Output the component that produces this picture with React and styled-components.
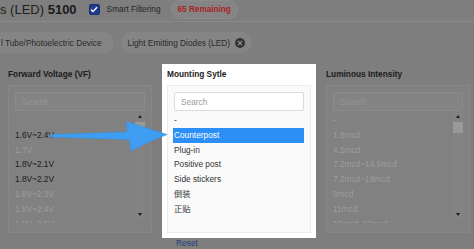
import React from "react";
import styled, { createGlobalStyle } from "styled-components";

const GlobalStyle = createGlobalStyle`
  html, body {
    margin: 0;
    padding: 0;
  }
  body {
    background: #7e7e7e;
    font-family: "Liberation Sans", Arial, "Noto Sans CJK SC", sans-serif;
    overflow: hidden;
  }
`;

const Page = styled.div`
  position: relative;
  width: 474px;
  height: 249px;
  overflow: hidden;
`;

const Header = styled.div`
  display: flex;
  align-items: center;
  height: 18px;
  padding-bottom: 3px;
  border-bottom: 1px solid #898989;
`;

const Title = styled.div`
  font-size: 13px;
  color: #1f1f1f;
  white-space: nowrap;
  b {
    font-weight: 700;
    color: #1a1a1a;
  }
`;

const Check = styled.span`
  display: inline-flex;
  align-items: center;
  justify-content: center;
  width: 11px;
  height: 11px;
  margin-left: 12px;
  box-sizing: border-box;
  border-radius: 2px;
  background: #1f3d8c;
  border: 1px solid #18306e;
`;

const Label = styled.span`
  margin-left: 7px;
  font-size: 8.3px;
  color: #262626;
`;

const Remaining = styled.span`
  margin-left: 10px;
  height: 17px;
  line-height: 17px;
  padding: 0 6px;
  border-radius: 9px;
  background: #858585;
  border: 1px solid #8a8a8a;
  color: #a92424;
  font-size: 8.2px;
  font-weight: 700;
`;

const ChipRow = styled.div`
  display: flex;
  gap: 7px;
  margin-top: 10px;
  margin-left: -6px;
`;

const Chip = styled.div`
  display: flex;
  align-items: center;
  height: 21px;
  padding: 0 ${({ $closable }) => ($closable ? "7px" : "12px")} 0 7px;
  border-radius: 11px;
  background: #858585;
  color: #2a2a2a;
  font-size: 8.3px;
  white-space: nowrap;
`;

const Close = styled.span`
  display: inline-flex;
  align-items: center;
  justify-content: center;
  width: 10px;
  height: 10px;
  margin-left: 5px;
  border-radius: 50%;
  background: #333;
`;

const Columns = styled.div`
  display: grid;
  grid-template-columns: 144px 154px 144px;
  column-gap: 10px;
  margin-top: 11px;
  padding-left: 8px;
`;

const Column = styled.div`
  padding: ${({ $spot }) => ($spot ? "5px" : "5px 0")};
  background: ${({ $spot }) => ($spot ? "#ffffff" : "transparent")};
`;

const ColTitle = styled.div`
  font-size: 8.3px;
  line-height: 10px;
  font-weight: 700;
  color: ${({ $spot }) => ($spot ? "#222" : "#1b1b1b")};
`;

const Box = styled.div`
  margin-top: 6px;
  height: 148px;
  box-sizing: border-box;
  padding: 6px;
  border: 1px solid ${({ $spot }) => ($spot ? "#ececec" : "#878787")};
  background: ${({ $spot }) => ($spot ? "#fafafa" : "#818181")};
`;

const Search = styled.div`
  display: flex;
  align-items: center;
  height: 19px;
  box-sizing: border-box;
  padding-left: 6px;
  border: 1px solid ${({ $spot }) => ($spot ? "#dcdcdc" : "#8b8b8b")};
  border-radius: 2px;
  background: ${({ $spot }) => ($spot ? "#fff" : "#848484")};
  color: ${({ $spot }) => ($spot ? "#9a9a9a" : "#959595")};
  font-size: 8.3px;
`;

const List = styled.div`
  display: flex;
  height: 110px;
  margin-top: 2px;
  margin-left: -1px;
  overflow: hidden;
`;

const Items = styled.div`
  flex: 1;
  min-width: 0;
`;

const Row = styled.div`
  height: 14.8px;
  line-height: 14.8px;
  padding-left: 1px;
  font-size: 8.3px;
  white-space: nowrap;
  color: ${({ $selected, $off, $spot }) =>
    $selected ? "#fff" : $spot ? "#333" : $off ? "#9d9d9d" : "#1c1c1c"};
  background: ${({ $selected }) => ($selected ? "#2b8ff5" : "transparent")};
`;

const Track = styled.div`
  display: flex;
  flex-direction: column;
  align-items: center;
  width: 10px;
  height: 108px;
  background: #838383;
`;

const Arrow = styled.span`
  width: 0;
  height: 0;
  margin-top: ${({ $down }) => ($down ? "auto" : "2px")};
  margin-bottom: ${({ $down }) => ($down ? "5px" : "0")};
  border-left: 2.5px solid transparent;
  border-right: 2.5px solid transparent;
  ${({ $down }) =>
    $down ? "border-top: 3px solid #1e1e1e;" : "border-bottom: 3px solid #1e1e1e;"}
`;

const Thumb = styled.span`
  width: 10px;
  height: 11px;
  margin-top: 4px;
  background: #999;
`;

const Reset = styled.div`
  grid-column: 2;
  padding-left: 14px;
  font-size: 8.4px;
  line-height: 10px;
  color: #22407e;
`;

const Pointer = styled.svg`
  position: absolute;
  left: 0;
  top: 0;
  pointer-events: none;
`;

const columns = [
  {
    title: "Forward Voltage (VF)",
    items: [
      ["\u00a0", true],
      ["1.6V~2.4V", false],
      ["1.7V", true],
      ["1.8V~2.1V", false],
      ["1.8V~2.2V", false],
      ["1.8V~2.3V", true],
      ["1.8V~2.4V", true],
      ["1.8V~2.5V", true],
    ],
    scroll: true,
  },
  {
    title: "Mounting Sytle",
    spot: true,
    items: [
      ["-"],
      ["Counterpost", false, true],
      ["Plug-in"],
      ["Positive post"],
      ["Side stickers"],
      ["倒装"],
      ["正贴"],
    ],
  },
  {
    title: "Luminous Intensity",
    items: [
      ["-", true],
      ["1.8mcd", true],
      ["4.5mcd", true],
      ["7.2mcd~14.5mcd", true],
      ["7.2mcd~18mcd", true],
      ["8mcd", true],
      ["11mcd", true],
      ["12mcd~18mcd", true],
    ],
    scroll: true,
    thumb: true,
  },
];

export default function App() {
  return (
    <Page>
      <GlobalStyle />
      <Header>
        <Title>
          s (LED) <b>5100</b>
        </Title>
        <Check>
          <svg width="8" height="7" viewBox="0 0 8 7">
            <path d="M1 3.6 L3 5.6 L7 1.2" fill="none" stroke="#fff" strokeWidth="1.4" />
          </svg>
        </Check>
        <Label>Smart Filtering</Label>
        <Remaining>65 Remaining</Remaining>
      </Header>

      <ChipRow>
        <Chip>l Tube/Photoelectric Device</Chip>
        <Chip $closable>
          Light Emitting Diodes (LED)
          <Close>
            <svg width="6" height="6" viewBox="0 0 6 6">
              <path d="M1 1 L5 5 M5 1 L1 5" stroke="#8c8c8c" strokeWidth="1.2" />
            </svg>
          </Close>
        </Chip>
      </ChipRow>

      <Columns>
        {columns.map((col) => (
          <Column key={col.title} $spot={col.spot}>
            <ColTitle $spot={col.spot}>{col.title}</ColTitle>
            <Box $spot={col.spot}>
              <Search $spot={col.spot}>Search</Search>
              <List>
                <Items>
                  {col.items.map(([text, off, selected]) => (
                    <Row key={text} $off={off} $selected={selected} $spot={col.spot}>
                      {text}
                    </Row>
                  ))}
                </Items>
                {col.scroll && (
                  <Track>
                    <Arrow />
                    <Thumb />
                    <Arrow $down />
                  </Track>
                )}
              </List>
            </Box>
          </Column>
        ))}
        <Reset>Reset</Reset>
      </Columns>

      <Pointer width="474" height="249" viewBox="0 0 474 249">
        <path
          d="M50 134.6 L127 132 L126.5 121.5 Q146 128 167 134.5 Q147 142 131 151 L129.5 139.5 L50 137 Z"
          fill="#3f9ef2"
          stroke="#3590e6"
          strokeWidth="0.6"
          strokeLinejoin="round"
        />
      </Pointer>
    </Page>
  );
}
